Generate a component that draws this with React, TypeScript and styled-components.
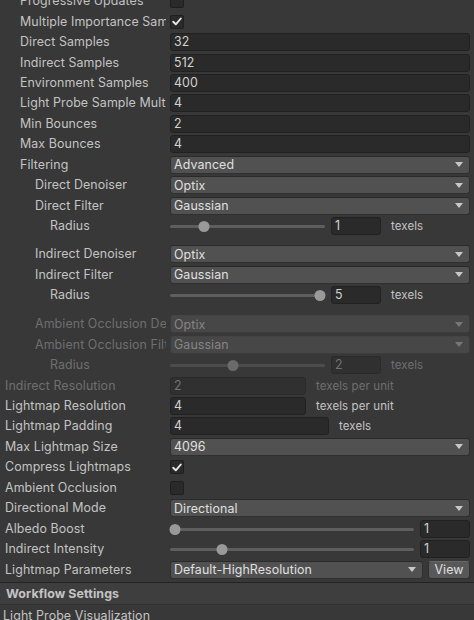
import React from "react";
import styled, { createGlobalStyle, css } from "styled-components";

const GlobalStyle = createGlobalStyle`
  html, body {
    margin: 0;
    padding: 0;
    background: #383838;
    overflow: hidden;
  }
  body {
    font-family: Inter, "Noto Sans", "DejaVu Sans", sans-serif;
    font-size: 12.4px;
    letter-spacing: 0.1px;
    color: #c4c4c4;
  }
`;

const Panel = styled.div`
  width: 474px;
  height: 620px;
  display: flex;
  flex-direction: column;
  overflow: hidden;
`;

const Body = styled.div`
  display: flex;
  flex-direction: column;
  margin-top: -8px;
`;

const Row = styled.div`
  display: grid;
  grid-template-columns: 170px 1fr;
  align-items: center;
  height: 18.45px;
  margin-bottom: 2px;
  padding-right: 4px;
`;

const Label = styled.div<{ $level: number; $disabled?: boolean }>`
  padding-left: ${(p) => 5 + p.$level * 15}px;
  margin-right: 4px;
  white-space: nowrap;
  overflow: hidden;
  color: ${(p) => (p.$disabled ? "#6f6f6f" : "#c4c4c4")};
  line-height: 18px;
`;

const Control = styled.div`
  display: flex;
  align-items: center;
  min-width: 0;
  height: 18px;
`;

const Spacer = styled.div<{ $h: number }>`
  height: ${(p) => p.$h}px;
  flex: none;
`;

const Field = styled.div<{ $disabled?: boolean; $width?: number }>`
  box-sizing: border-box;
  height: 18px;
  ${(p) => (p.$width ? css`width: ${p.$width}px; flex: none;` : css`flex: 1; min-width: 0;`)}
  background: ${(p) => (p.$disabled ? "#303030" : "#2a2a2a")};
  border: 1px solid ${(p) => (p.$disabled ? "#2a2a2a" : "#212121")};
  border-radius: 3px;
  padding-left: 3px;
  line-height: 16px;
  color: ${(p) => (p.$disabled ? "#737373" : "#d2d2d2")};
  white-space: nowrap;
  overflow: hidden;
`;

const Suffix = styled.div<{ $width: number; $disabled?: boolean }>`
  width: ${(p) => p.$width}px;
  flex: none;
  padding-left: 10px;
  box-sizing: border-box;
  color: ${(p) => (p.$disabled ? "#6f6f6f" : "#c4c4c4")};
  white-space: nowrap;
  font-size: 11.5px;
`;

const DropdownBox = styled.div<{ $disabled?: boolean }>`
  box-sizing: border-box;
  flex: 1;
  min-width: 0;
  height: 18px;
  display: flex;
  align-items: center;
  justify-content: space-between;
  background: ${(p) => (p.$disabled ? "#474747" : "#515151")};
  border: 1px solid ${(p) => (p.$disabled ? "#3c3c3c" : "#303030")};
  border-top-color: ${(p) => (p.$disabled ? "#444" : "#2a2a2a")};
  border-radius: 3px;
  padding: 0 6px 0 3px;
  color: ${(p) => (p.$disabled ? "#858585" : "#e0e0e0")};
  white-space: nowrap;
`;

const Arrow = styled.span<{ $disabled?: boolean }>`
  width: 0;
  height: 0;
  border-left: 4px solid transparent;
  border-right: 4px solid transparent;
  border-top: 5px solid ${(p) => (p.$disabled ? "#777" : "#c8c8c8")};
  flex: none;
`;

const CheckBox = styled.div`
  box-sizing: border-box;
  width: 14px;
  height: 14px;
  background: #2a2a2a;
  border: 1px solid #1f1f1f;
  border-radius: 2px;
  display: flex;
  align-items: center;
  justify-content: center;
`;

const Track = styled.div<{ $disabled?: boolean }>`
  position: relative;
  flex: 1;
  min-width: 0;
  height: 18px;
  &::before {
    content: "";
    position: absolute;
    left: 0;
    right: 0;
    top: 8px;
    height: 3px;
    border-radius: 2px;
    background: ${(p) => (p.$disabled ? "#4c4c4c" : "#5e5e5e")};
  }
`;

const Thumb = styled.div<{ $disabled?: boolean }>`
  position: absolute;
  top: 4px;
  width: 11px;
  height: 11px;
  border-radius: 50%;
  background: ${(p) => (p.$disabled ? "#6a6a6a" : "#999999")};
  transform: translateX(-50%);
`;

const Gap = styled.div<{ $w: number }>`
  width: ${(p) => p.$w}px;
  flex: none;
`;

const Button = styled.div`
  box-sizing: border-box;
  width: 42px;
  height: 18px;
  flex: none;
  background: #585858;
  border: 1px solid #303030;
  border-top-color: #656565;
  border-radius: 3px;
  color: #e0e0e0;
  text-align: center;
  line-height: 15px;
`;

const Header = styled.div`
  margin-top: 1px;
  height: 21px;
  border-top: 1px solid #232323;
  border-bottom: 1px solid #303030;
  background: #3e3e3e;
  display: flex;
  align-items: center;
  padding-left: 6px;
  font-weight: 700;
  color: #c4c4c4;
  flex: none;
`;

const Plain = styled.div`
  padding-left: 3px;
  line-height: 20px;
  margin-top: 1px;
  color: #c4c4c4;
  white-space: nowrap;
`;

const Check = () => (
  <svg width="10" height="9" viewBox="0 0 10 9">
    <path d="M1.2 4.8 L3.8 7.3 L8.8 1.5" fill="none" stroke="#e8e8e8" strokeWidth="1.9" strokeLinecap="round" strokeLinejoin="round" />
  </svg>
);

type RowProps = { label: string; level: number; disabled?: boolean; children?: React.ReactNode };
const PropRow = ({ label, level, disabled, children }: RowProps) => (
  <Row>
    <Label $level={level} $disabled={disabled}>{label}</Label>
    <Control>{children}</Control>
  </Row>
);

const Dropdown = ({ value, disabled }: { value: string; disabled?: boolean }) => (
  <DropdownBox $disabled={disabled}>
    <span>{value}</span>
    <Arrow $disabled={disabled} />
  </DropdownBox>
);

const Slider = ({ frac, width, disabled }: { frac: number; width: number; disabled?: boolean }) => (
  <Track $disabled={disabled}>
    <Thumb $disabled={disabled} style={{ left: 5 + frac * (width - 10) }} />
  </Track>
);

export default function App() {
  return (
    <Panel>
      <GlobalStyle />
      <Body>
        <PropRow label="Progressive Updates" level={1}><CheckBox /></PropRow>
        <PropRow label="Multiple Importance Sampling" level={1}><CheckBox><Check /></CheckBox></PropRow>
        <PropRow label="Direct Samples" level={1}><Field>32</Field></PropRow>
        <PropRow label="Indirect Samples" level={1}><Field>512</Field></PropRow>
        <PropRow label="Environment Samples" level={1}><Field>400</Field></PropRow>
        <PropRow label="Light Probe Sample Multiplier" level={1}><Field>4</Field></PropRow>
        <PropRow label="Min Bounces" level={1}><Field>2</Field></PropRow>
        <PropRow label="Max Bounces" level={1}><Field>4</Field></PropRow>
        <PropRow label="Filtering" level={1}><Dropdown value="Advanced" /></PropRow>
        <PropRow label="Direct Denoiser" level={2}><Dropdown value="Optix" /></PropRow>
        <PropRow label="Direct Filter" level={2}><Dropdown value="Gaussian" /></PropRow>
        <PropRow label="Radius" level={3}>
          <Slider frac={0.2} width={155} />
          <Gap $w={6} />
          <Field $width={50}>1</Field>
          <Suffix $width={89}>texels</Suffix>
        </PropRow>
        <Spacer $h={8} />
        <PropRow label="Indirect Denoiser" level={2}><Dropdown value="Optix" /></PropRow>
        <PropRow label="Indirect Filter" level={2}><Dropdown value="Gaussian" /></PropRow>
        <PropRow label="Radius" level={3}>
          <Slider frac={1} width={155} />
          <Gap $w={6} />
          <Field $width={50}>5</Field>
          <Suffix $width={89}>texels</Suffix>
        </PropRow>
        <Spacer $h={8.5} />
        <PropRow label="Ambient Occlusion Denoiser" level={2} disabled><Dropdown value="Optix" disabled /></PropRow>
        <PropRow label="Ambient Occlusion Filter" level={2} disabled><Dropdown value="Gaussian" disabled /></PropRow>
        <PropRow label="Radius" level={3} disabled>
          <Slider frac={0.4} width={155} disabled />
          <Gap $w={6} />
          <Field $width={50} $disabled>2</Field>
          <Suffix $width={89} $disabled>texels</Suffix>
        </PropRow>
        <PropRow label="Indirect Resolution" level={0} disabled>
          <Field $disabled>2</Field>
          <Suffix $width={164} $disabled>texels per unit</Suffix>
        </PropRow>
        <PropRow label="Lightmap Resolution" level={0}>
          <Field>4</Field>
          <Suffix $width={164}>texels per unit</Suffix>
        </PropRow>
        <PropRow label="Lightmap Padding" level={0}>
          <Field>4</Field>
          <Suffix $width={141}>texels</Suffix>
        </PropRow>
        <PropRow label="Max Lightmap Size" level={0}><Dropdown value="4096" /></PropRow>
        <PropRow label="Compress Lightmaps" level={0}><CheckBox><Check /></CheckBox></PropRow>
        <PropRow label="Ambient Occlusion" level={0}><CheckBox /></PropRow>
        <PropRow label="Directional Mode" level={0}><Dropdown value="Directional" /></PropRow>
        <PropRow label="Albedo Boost" level={0}>
          <Slider frac={0} width={244} />
          <Gap $w={6} />
          <Field $width={50}>1</Field>
        </PropRow>
        <PropRow label="Indirect Intensity" level={0}>
          <Slider frac={0.2} width={244} />
          <Gap $w={6} />
          <Field $width={50}>1</Field>
        </PropRow>
        <PropRow label="Lightmap Parameters" level={0}>
          <Dropdown value="Default-HighResolution" />
          <Gap $w={5} />
          <Button>View</Button>
        </PropRow>
        <Header>Workflow Settings</Header>
        <Plain>Light Probe Visualization</Plain>
      </Body>
    </Panel>
  );
}
